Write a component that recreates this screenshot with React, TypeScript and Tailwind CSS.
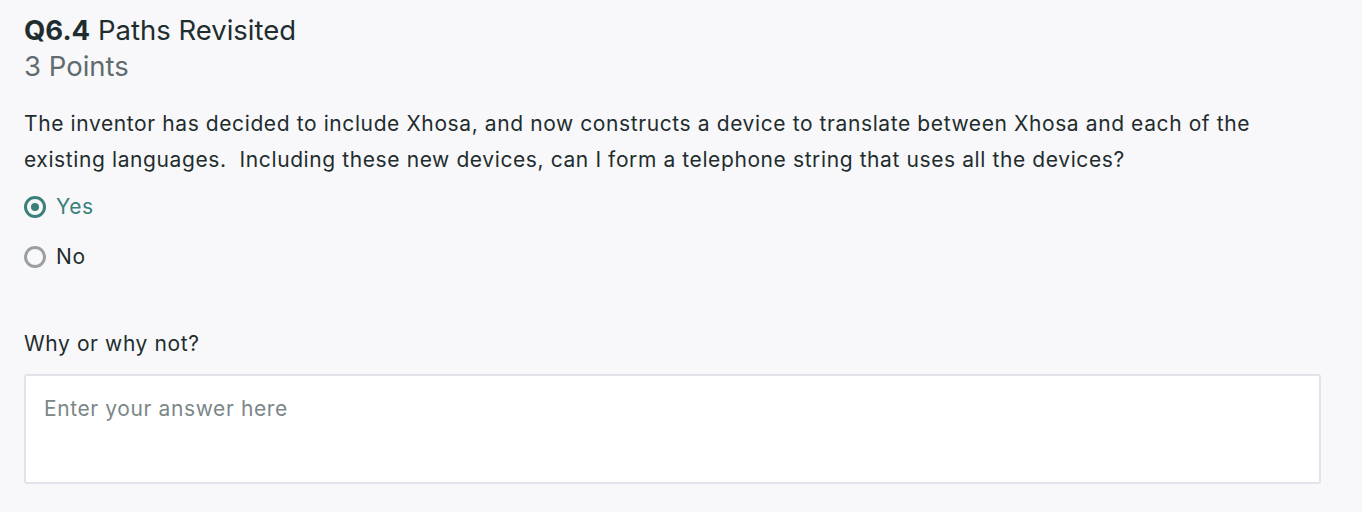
import React from "react";

export default function App() {
  return (
    <div className="min-h-[512px] w-full bg-[#f8f8fa] text-[#1f2d2e] font-['Inter',sans-serif]">
      <div className="px-6 pt-[12px]">
        <div className="text-[27.5px] leading-[36px]">
          <span className="font-bold">Q6.4</span> Paths Revisited
        </div>
        <div className="text-[27.5px] leading-[36px] text-[#5f6b6d]">3 Points</div>
        <p className="mt-[22px] text-[21px] leading-[36px] tracking-[0.6px]">
          The inventor has decided to include Xhosa, and now constructs a device to translate between Xhosa and each of the existing languages.&nbsp; Including these new devices, can I form a telephone string that uses all the devices?
        </p>
        <div className="mt-[11px] flex flex-col gap-[14px]">
          <label className="flex items-center gap-[10px] h-[36px] text-[21px] tracking-[0.6px] text-[#3a7f7a]">
            <span className="w-[22px] h-[22px] rounded-full border-[3px] border-[#3a7f7a] flex items-center justify-center">
              <span className="w-[8px] h-[8px] rounded-full bg-[#3a7f7a]" />
            </span>
            Yes
          </label>
          <label className="flex items-center gap-[10px] h-[36px] text-[21px] tracking-[0.6px]">
            <span className="w-[22px] h-[22px] rounded-full border-[3px] border-[#9a9fa0]" />
            No
          </label>
        </div>
        <div className="mt-[51px] text-[21px] leading-[36px] tracking-[0.6px]">Why or why not?</div>
        <div className="mt-[12px] mr-[17px] h-[110px] rounded-[3px] border-2 border-[#e1e3ea] bg-white px-[18px] pt-[19px] text-[21px] leading-[28px] tracking-[0.6px] text-[#7b8788]">
          Enter your answer here
        </div>
      </div>
    </div>
  );
}
